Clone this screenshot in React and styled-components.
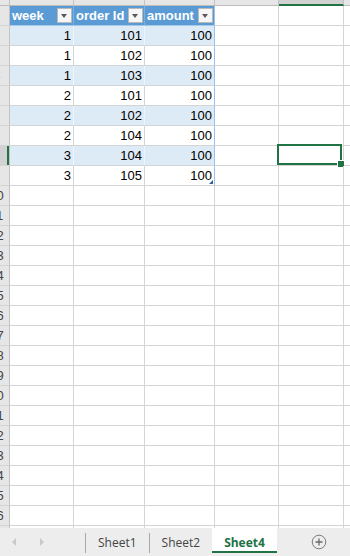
import React from "react";
import styled, { createGlobalStyle, css } from "styled-components";

const GlobalStyle = createGlobalStyle`
  html, body {
    margin: 0;
    padding: 0;
    background: #fff;
    overflow: hidden;
  }
  * {
    box-sizing: border-box;
  }
`;

const GREEN = "#217346";
const GRID = "#d4d4d4";
const HEAD_GRAY = "#e6e6e6";

const headers = ["week", "order Id", "amount"];
const tableRows = [
  [1, 101, 100],
  [1, 102, 100],
  [1, 103, 100],
  [2, 101, 100],
  [2, 102, 100],
  [2, 104, 100],
  [3, 104, 100],
  [3, 105, 100],
];
const TOTAL_ROWS = 27;
const COLS = 6;
const SELECTED = { row: 8, col: 4 };

export default function App() {
  const rows = [];
  for (let r = 1; r <= TOTAL_ROWS; r++) {
    const cells = [];
    for (let c = 0; c < COLS; c++) {
      const key = `${r}-${c}`;
      const inTable = c < 3;
      const edge = c === 2;
      const last = c === COLS - 1;
      if (r === 1 && inTable) {
        cells.push(
          <HeadCell key={key} $edge={edge}>
            <span>{headers[c]}</span>
            <FilterButton />
          </HeadCell>
        );
      } else if (r > 1 && r <= tableRows.length + 1 && inTable) {
        cells.push(
          <Cell
            key={key}
            $band={r % 2 === 0}
            $edge={edge}
            $corner={edge && r === tableRows.length + 1}
          >
            {tableRows[r - 2][c]}
          </Cell>
        );
      } else {
        cells.push(
          <Cell
            key={key}
            $last={last}
            $selected={r === SELECTED.row && c === SELECTED.col}
          />
        );
      }
    }
    rows.push(
      <React.Fragment key={r}>
        <RowHead $selected={r === SELECTED.row}>
          <RowNum>{r}</RowNum>
        </RowHead>
        {cells}
      </React.Fragment>
    );
  }

  return (
    <>
      <GlobalStyle />
      <Sheet>
        <Grid>
          <ColHead />
          {Array.from({ length: COLS }).map((_, i) => (
            <ColHead key={i} $selected={i === SELECTED.col} $last={i === COLS - 1} />
          ))}
          {rows}
        </Grid>
        <TabBar>
          <Nav>
            <Arrow $dir="left" />
            <Arrow $dir="right" />
          </Nav>
          <Divider />
          <Tab>Sheet1</Tab>
          <Divider />
          <Tab>Sheet2</Tab>
          <Tab $active>Sheet4</Tab>
          <AddButton viewBox="0 0 16 16">
            <circle cx="8" cy="8" r="6.8" fill="none" stroke="#7a7a7a" strokeWidth="1" />
            <path d="M8 4.5v7M4.5 8h7" stroke="#6a6a6a" strokeWidth="1.3" />
          </AddButton>
        </TabBar>
      </Sheet>
    </>
  );
}

const Sheet = styled.div`
  width: 350px;
  height: 556px;
  display: flex;
  flex-direction: column;
  overflow: hidden;
  background: #fff;
`;

const Grid = styled.div`
  flex: 1;
  display: grid;
  grid-template-columns: 10px 64px 71px 70px 64px 65px 1fr;
  grid-template-rows: 6px;
  grid-auto-rows: 20px;
  align-content: start;
  overflow: hidden;
  font-family: "Liberation Sans", Arial, sans-serif;
  font-size: 13px;
  color: #000;
`;

const ColHead = styled.div`
  background: ${HEAD_GRAY};
  border-right: 1px solid #c3c3c3;
  border-bottom: 1px solid #bcbcbc;
  ${(p) => p.$last && "border-right: none;"}
  ${(p) =>
    p.$selected &&
    css`
      background: #d2d2d2;
      border-bottom: 2px solid ${GREEN};
    `}
`;

const RowHead = styled.div`
  display: flex;
  justify-content: flex-end;
  overflow: hidden;
  background: ${HEAD_GRAY};
  border-right: 1px solid #c3c3c3;
  border-bottom: 1px solid ${GRID};
  color: #444;
  line-height: 19px;
  ${(p) =>
    p.$selected &&
    css`
      background: #d2d2d2;
      color: ${GREEN};
      box-shadow: inset -2px 0 0 ${GREEN};
    `}
`;

const RowNum = styled.span`
  flex-shrink: 0;
  width: 25px;
  text-align: center;
`;

const Cell = styled.div`
  position: relative;
  padding: 0 2px;
  text-align: right;
  line-height: 19px;
  white-space: nowrap;
  border-right: 1px solid ${GRID};
  border-bottom: 1px solid ${GRID};
  ${(p) => p.$last && "border-right: none;"}
  ${(p) =>
    p.$band &&
    css`
      background: #ddebf7;
      border-right-color: #eef4fb;
    `}
  ${(p) => p.$edge && "border-right-color: #9bc2e6;"}
  ${(p) =>
    p.$corner &&
    css`
      &::after {
        content: "";
        position: absolute;
        right: 1px;
        bottom: 1px;
        border-left: 4px solid transparent;
        border-bottom: 4px solid #2e5f9e;
      }
    `}
  ${(p) =>
    p.$selected &&
    css`
      &::before {
        content: "";
        position: absolute;
        top: -2px;
        left: -2px;
        right: 1px;
        bottom: 0;
        border: 2px solid ${GREEN};
      }
      &::after {
        content: "";
        position: absolute;
        right: -2px;
        bottom: -3px;
        width: 6px;
        height: 6px;
        background: ${GREEN};
        border: 1px solid #fff;
      }
    `}
`;

const HeadCell = styled.div`
  display: flex;
  align-items: center;
  justify-content: space-between;
  padding: 0 1px 0 2px;
  background: #5b9bd5;
  color: #fff;
  font-weight: 700;
  line-height: 19px;
  border-right: 1px solid #7eb0de;
  border-bottom: 1px solid #a9c9e8;
  ${(p) => p.$edge && "border-right-color: #9bc2e6;"}
`;

const FilterButton = styled.span`
  position: relative;
  width: 15px;
  height: 15px;
  flex-shrink: 0;
  background: #f6f6f6;
  border: 1px solid #b9b9b9;

  &::after {
    content: "";
    position: absolute;
    left: 3px;
    top: 5px;
    border-left: 3.5px solid transparent;
    border-right: 3.5px solid transparent;
    border-top: 4px solid #5a5a5a;
  }
`;

const TabBar = styled.div`
  height: 28px;
  flex-shrink: 0;
  display: flex;
  align-items: flex-start;
  background: #ededed;
  font-family: "Open Sans", "Noto Sans", sans-serif;
  font-size: 12px;
`;

const Nav = styled.div`
  width: 85px;
  height: 28px;
  display: flex;
  align-items: center;
  gap: 24px;
  padding-left: 12px;
`;

const Arrow = styled.span`
  width: 0;
  height: 0;
  border-top: 4px solid transparent;
  border-bottom: 4px solid transparent;
  ${(p) =>
    p.$dir === "left"
      ? "border-right: 4px solid #c9c9c9;"
      : "border-left: 4px solid #c9c9c9;"}
`;

const Divider = styled.span`
  width: 1px;
  height: 20px;
  margin-top: 5px;
  background: #a8a8a8;
`;

const Tab = styled.div`
  height: 25px;
  padding: 6px 12px 0;
  line-height: 17px;
  color: #444;
  ${(p) =>
    p.$active &&
    css`
      padding: 6px 12px 0;
      background: #fff;
      color: ${GREEN};
      font-weight: 700;
      border-bottom: 2px solid ${GREEN};
    `}
`;

const AddButton = styled.svg`
  width: 16px;
  height: 16px;
  margin-left: 34px;
  align-self: center;
`;
